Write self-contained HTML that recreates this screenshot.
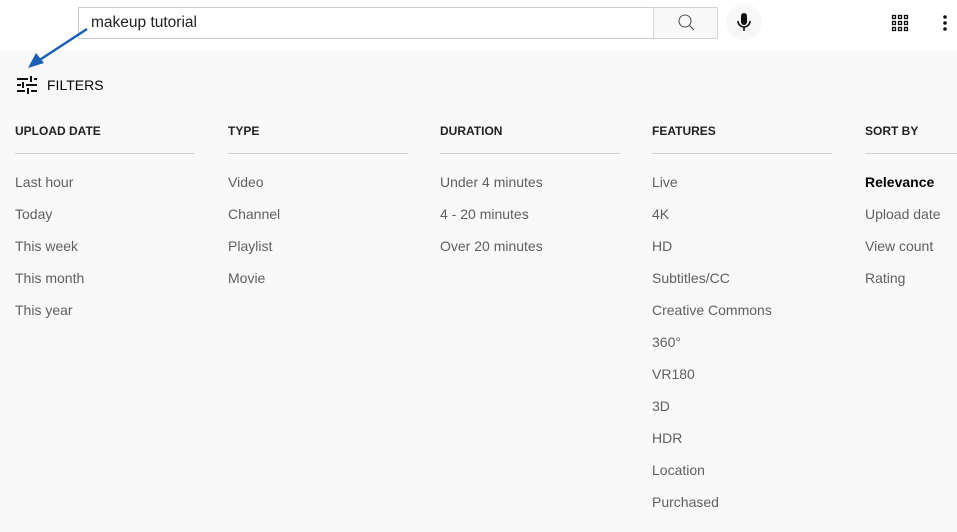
<!DOCTYPE html>
<html><head><style>
body{margin:0;width:957px;height:532px;overflow:hidden;background:#f9f9f9;font-family:"Liberation Sans",sans-serif;position:relative}
.top{position:absolute;left:0;top:0;width:957px;height:51px;background:#fff}
.sb{position:absolute;left:78px;top:7px;width:575px;height:30px;border:1px solid #ccc;border-right:none;background:#fff;box-sizing:content-box}
.sb span{position:absolute;left:12px;top:6px;font-size:15.5px;color:#222}
.btn{position:absolute;left:653px;top:7px;width:63px;height:30px;border:1px solid #d3d3d3;background:#f8f8f8;border-radius:0 2px 2px 0}
.mic{position:absolute;left:726px;top:4px;width:36px;height:36px;border-radius:50%;background:#f8f8f8}
.col{position:absolute;top:124px;width:180px}
.h{font-size:12px;font-weight:bold;color:#222;height:29px;border-bottom:1px solid #d0d0d0;margin-bottom:12px}
.i{font-size:14px;color:#606060;height:32px;line-height:32px}
</style></head><body>
<div class="top"></div>
<div class="sb"><span>makeup tutorial</span></div>
<div class="btn"><svg width="63" height="30" viewBox="0 0 63 30"><circle cx="31" cy="13" r="6" fill="none" stroke="#555" stroke-width="1.1"/><line x1="35.5" y1="17.5" x2="40" y2="22" stroke="#555" stroke-width="1.1"/></svg></div>
<div class="mic"><svg width="36" height="36" viewBox="0 0 36 36"><rect x="15" y="9" width="6" height="12" rx="3" fill="#111"/><path d="M12 17a6 6 0 0 0 12 0" fill="none" stroke="#111" stroke-width="1.6"/><line x1="18" y1="23" x2="18" y2="27" stroke="#111" stroke-width="1.6"/></svg></div>
<svg style="position:absolute;left:891px;top:14px" width="18" height="18" viewBox="0 0 18 18" fill="none" stroke="#111" stroke-width="1.3"><rect x="1.5" y="1.5" width="3" height="3"/><rect x="7.5" y="1.5" width="3" height="3"/><rect x="13.5" y="1.5" width="3" height="3"/><rect x="1.5" y="7.5" width="3" height="3"/><rect x="7.5" y="7.5" width="3" height="3"/><rect x="13.5" y="7.5" width="3" height="3"/><rect x="1.5" y="13.5" width="3" height="3"/><rect x="7.5" y="13.5" width="3" height="3"/><rect x="13.5" y="13.5" width="3" height="3"/></svg>
<svg style="position:absolute;left:942px;top:14px" width="6" height="18"><circle cx="3" cy="3" r="1.8" fill="#111"/><circle cx="3" cy="9" r="1.8" fill="#111"/><circle cx="3" cy="15" r="1.8" fill="#111"/></svg>
<svg style="position:absolute;left:0;top:0" width="100" height="80"><line x1="87" y1="29" x2="38" y2="61" stroke="#1a5fb4" stroke-width="2.5"/><polygon points="28,68 36,53 44,63" fill="#1a5fb4"/></svg>
<svg style="position:absolute;left:17px;top:76px" width="20" height="18" viewBox="0 0 20 18" fill="#111"><rect x="0" y="2" width="11" height="2"/><rect x="13" y="0" width="2" height="6"/><rect x="17" y="2" width="3" height="2"/><rect x="0" y="8" width="4" height="2"/><rect x="5" y="6" width="2" height="6"/><rect x="9" y="8" width="11" height="2"/><rect x="0" y="14" width="8" height="2"/><rect x="10" y="12" width="2" height="6"/><rect x="14" y="14" width="6" height="2"/></svg>
<div style="position:absolute;left:47px;top:77px;font-size:14px;color:#030303">FILTERS</div>
<div class="col" style="left:15px"><div class="h">UPLOAD DATE</div><div class="i">Last hour</div><div class="i">Today</div><div class="i">This week</div><div class="i">This month</div><div class="i">This year</div></div>
<div class="col" style="left:228px"><div class="h">TYPE</div><div class="i">Video</div><div class="i">Channel</div><div class="i">Playlist</div><div class="i">Movie</div></div>
<div class="col" style="left:440px"><div class="h">DURATION</div><div class="i">Under 4 minutes</div><div class="i">4 - 20 minutes</div><div class="i">Over 20 minutes</div></div>
<div class="col" style="left:652px"><div class="h">FEATURES</div><div class="i">Live</div><div class="i">4K</div><div class="i">HD</div><div class="i">Subtitles/CC</div><div class="i">Creative Commons</div><div class="i">360°</div><div class="i">VR180</div><div class="i">3D</div><div class="i">HDR</div><div class="i">Location</div><div class="i">Purchased</div></div>
<div class="col" style="left:865px"><div class="h">SORT BY</div><div class="i" style="color:#030303;font-weight:bold">Relevance</div><div class="i">Upload date</div><div class="i">View count</div><div class="i">Rating</div></div>
</body></html>
